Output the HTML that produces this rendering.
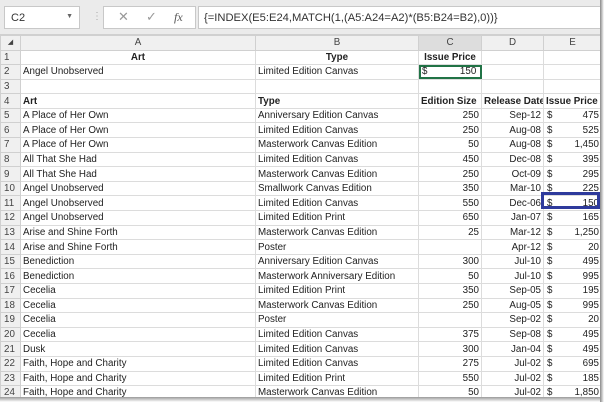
<!DOCTYPE html>
<html><head><meta charset="utf-8"><style>
*{margin:0;padding:0;box-sizing:border-box}
body{width:604px;height:402px;overflow:hidden;background:#fff;font-family:"Liberation Sans",sans-serif;font-size:9.8px;color:#222;position:relative}
.top{position:absolute;left:0;top:0;width:604px;height:35px;background:#ebebeb;border-bottom:1px solid #d0d0d0}
.nb{position:absolute;left:4px;top:6px;width:76px;height:23px;background:#fff;border:1px solid #c8c8c8;font-size:11px;padding:5px 0 0 6px;color:#333}
.nb span{position:absolute;right:6px;top:6px;font-size:7px;color:#666}
.dots{position:absolute;left:92px;top:11px;color:#aaa;font-size:10px}
.fx{position:absolute;left:103px;top:6px;width:93px;height:23px;background:#fff;border:1px solid #c8c8c8;color:#999;font-size:13px}
.fi{position:absolute;left:198px;top:6px;width:404px;height:23px;background:#fff;border:1px solid #c8c8c8;font-size:11.2px;padding:5px 0 0 5px;color:#333}
table{position:absolute;left:0;top:35px;border-collapse:collapse;table-layout:fixed;width:601px}
td{height:14.6px;border:1px solid #dcdcdc;white-space:nowrap;overflow:hidden;padding:0 2px;line-height:13px}
tr.h td{background:#f0f0f0;text-align:center;height:14.5px;color:#444;border-color:#d0d0d0}
td.n{background:#f0f0f0;text-align:left;color:#444;padding-left:3px;border-color:#d0d0d0}
.r{text-align:right}.c{text-align:center}.b{font-weight:bold}
.d{position:relative}
.d i{font-style:normal;position:absolute;left:3px}
.sh{position:absolute;left:0;top:397px;width:604px;height:5px;background:linear-gradient(#999,#fff)}
.rs{position:absolute;left:600px;top:0;width:4px;height:402px;background:linear-gradient(90deg,#888,#fff)}
.blue{position:absolute;left:541px;top:192px;width:59px;height:17px;border:3px solid #2e3a9c}
</style></head><body>
<div class="top">
<div class="nb">C2<span>▼</span></div>
<div class="dots">⋮</div>
<div class="fx"><span style="position:absolute;left:14px;top:2px">✕</span><span style="position:absolute;left:42px;top:2px">✓</span><span style="position:absolute;left:70px;top:3px;font-style:italic;font-family:'Liberation Serif',serif;color:#555;font-size:12px">fx</span></div>
<div class="fi">{=INDEX(E5:E24,MATCH(1,(A5:A24=A2)*(B5:B24=B2),0))}</div>
</div>
<table>
<colgroup><col style="width:20px"><col style="width:235px"><col style="width:163px"><col style="width:63px"><col style="width:62px"><col style="width:58px"></colgroup>
<tr class="h"><td style="font-size:7px">◢</td><td>A</td><td>B</td><td style="background:#ddd">C</td><td>D</td><td>E</td></tr>
<tr><td class="n">1</td><td class="c b">Art</td><td class="c b">Type</td><td class="c b">Issue Price</td><td></td><td></td></tr>
<tr><td class="n">2</td><td>Angel Unobserved</td><td>Limited Edition Canvas</td><td class="r d" style="outline:2px solid #217346;outline-offset:-2px"><i>$</i>150&nbsp;</td><td></td><td></td></tr>
<tr><td class="n">3</td><td></td><td></td><td></td><td></td><td></td></tr>
<tr><td class="n">4</td><td class="b">Art</td><td class="b">Type</td><td class="b">Edition Size</td><td class="b">Release Date</td><td class="b">Issue Price</td></tr>
<tr><td class="n">5</td><td>A Place of Her Own</td><td>Anniversary Edition Canvas</td><td class="r">250</td><td class="r">Sep-12</td><td class="r d"><i>$</i>475</td></tr>
<tr><td class="n">6</td><td>A Place of Her Own</td><td>Limited Edition Canvas</td><td class="r">250</td><td class="r">Aug-08</td><td class="r d"><i>$</i>525</td></tr>
<tr><td class="n">7</td><td>A Place of Her Own</td><td>Masterwork Canvas Edition</td><td class="r">50</td><td class="r">Aug-08</td><td class="r d"><i>$</i>1,450</td></tr>
<tr><td class="n">8</td><td>All That She Had</td><td>Limited Edition Canvas</td><td class="r">450</td><td class="r">Dec-08</td><td class="r d"><i>$</i>395</td></tr>
<tr><td class="n">9</td><td>All That She Had</td><td>Masterwork Canvas Edition</td><td class="r">250</td><td class="r">Oct-09</td><td class="r d"><i>$</i>295</td></tr>
<tr><td class="n">10</td><td>Angel Unobserved</td><td>Smallwork Canvas Edition</td><td class="r">350</td><td class="r">Mar-10</td><td class="r d"><i>$</i>225</td></tr>
<tr><td class="n">11</td><td>Angel Unobserved</td><td>Limited Edition Canvas</td><td class="r">550</td><td class="r">Dec-06</td><td class="r d"><i>$</i>150</td></tr>
<tr><td class="n">12</td><td>Angel Unobserved</td><td>Limited Edition Print</td><td class="r">650</td><td class="r">Jan-07</td><td class="r d"><i>$</i>165</td></tr>
<tr><td class="n">13</td><td>Arise and Shine Forth</td><td>Masterwork Canvas Edition</td><td class="r">25</td><td class="r">Mar-12</td><td class="r d"><i>$</i>1,250</td></tr>
<tr><td class="n">14</td><td>Arise and Shine Forth</td><td>Poster</td><td></td><td class="r">Apr-12</td><td class="r d"><i>$</i>20</td></tr>
<tr><td class="n">15</td><td>Benediction</td><td>Anniversary Edition Canvas</td><td class="r">300</td><td class="r">Jul-10</td><td class="r d"><i>$</i>495</td></tr>
<tr><td class="n">16</td><td>Benediction</td><td>Masterwork Anniversary Edition</td><td class="r">50</td><td class="r">Jul-10</td><td class="r d"><i>$</i>995</td></tr>
<tr><td class="n">17</td><td>Cecelia</td><td>Limited Edition Print</td><td class="r">350</td><td class="r">Sep-05</td><td class="r d"><i>$</i>195</td></tr>
<tr><td class="n">18</td><td>Cecelia</td><td>Masterwork Canvas Edition</td><td class="r">250</td><td class="r">Aug-05</td><td class="r d"><i>$</i>995</td></tr>
<tr><td class="n">19</td><td>Cecelia</td><td>Poster</td><td></td><td class="r">Sep-02</td><td class="r d"><i>$</i>20</td></tr>
<tr><td class="n">20</td><td>Cecelia</td><td>Limited Edition Canvas</td><td class="r">375</td><td class="r">Sep-08</td><td class="r d"><i>$</i>495</td></tr>
<tr><td class="n">21</td><td>Dusk</td><td>Limited Edition Canvas</td><td class="r">300</td><td class="r">Jan-04</td><td class="r d"><i>$</i>495</td></tr>
<tr><td class="n">22</td><td>Faith, Hope and Charity</td><td>Limited Edition Canvas</td><td class="r">275</td><td class="r">Jul-02</td><td class="r d"><i>$</i>695</td></tr>
<tr><td class="n">23</td><td>Faith, Hope and Charity</td><td>Limited Edition Print</td><td class="r">550</td><td class="r">Jul-02</td><td class="r d"><i>$</i>185</td></tr>
<tr><td class="n">24</td><td>Faith, Hope and Charity</td><td>Masterwork Canvas Edition</td><td class="r">50</td><td class="r">Jul-02</td><td class="r d"><i>$</i>1,850</td></tr>
</table>
<div class="blue"></div>
<div class="sh"></div><div class="rs"></div>
</body></html>
